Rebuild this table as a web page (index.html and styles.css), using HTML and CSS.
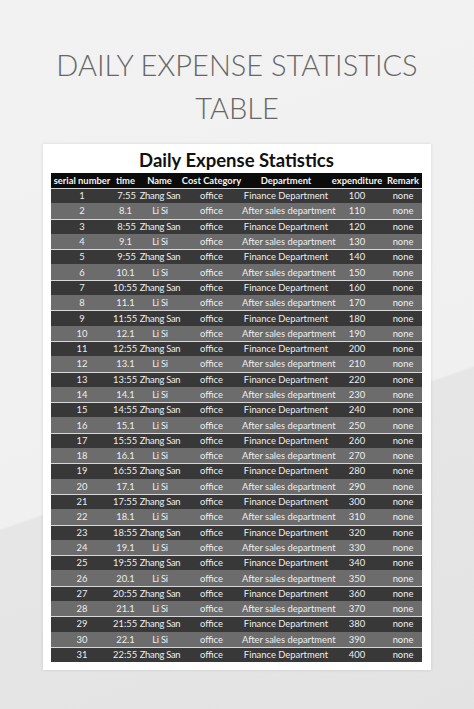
FILE: index.html
```html
<!DOCTYPE html>
<html>
<head>
<meta charset="utf-8">
<link rel="stylesheet" href="styles.css">
</head>
<body>
<div class="page">
  <h1 class="hero">DAILY EXPENSE STATISTICS<br>TABLE</h1>
  <div class="card">
    <div class="card-title">Daily Expense Statistics</div>
    <table class="sheet">
      <colgroup>
        <col class="c1"><col class="c2"><col class="c3"><col class="c4"><col class="c5"><col class="c6"><col class="c7">
      </colgroup>
      <thead>
        <tr><th>serial number</th><th>time</th><th>Name</th><th>Cost Category</th><th>Department</th><th>expenditure</th><th>Remark</th></tr>
      </thead>
      <tbody>
        <tr class="odd"><td>1</td><td>7:55</td><td>Zhang San</td><td>office</td><td>Finance Department</td><td>100</td><td>none</td></tr>
        <tr class="even"><td>2</td><td>8.1</td><td>Li Si</td><td>office</td><td>After sales department</td><td>110</td><td>none</td></tr>
        <tr class="odd"><td>3</td><td>8:55</td><td>Zhang San</td><td>office</td><td>Finance Department</td><td>120</td><td>none</td></tr>
        <tr class="even"><td>4</td><td>9.1</td><td>Li Si</td><td>office</td><td>After sales department</td><td>130</td><td>none</td></tr>
        <tr class="odd"><td>5</td><td>9:55</td><td>Zhang San</td><td>office</td><td>Finance Department</td><td>140</td><td>none</td></tr>
        <tr class="even"><td>6</td><td>10.1</td><td>Li Si</td><td>office</td><td>After sales department</td><td>150</td><td>none</td></tr>
        <tr class="odd"><td>7</td><td>10:55</td><td>Zhang San</td><td>office</td><td>Finance Department</td><td>160</td><td>none</td></tr>
        <tr class="even"><td>8</td><td>11.1</td><td>Li Si</td><td>office</td><td>After sales department</td><td>170</td><td>none</td></tr>
        <tr class="odd"><td>9</td><td>11:55</td><td>Zhang San</td><td>office</td><td>Finance Department</td><td>180</td><td>none</td></tr>
        <tr class="even"><td>10</td><td>12.1</td><td>Li Si</td><td>office</td><td>After sales department</td><td>190</td><td>none</td></tr>
        <tr class="odd"><td>11</td><td>12:55</td><td>Zhang San</td><td>office</td><td>Finance Department</td><td>200</td><td>none</td></tr>
        <tr class="even"><td>12</td><td>13.1</td><td>Li Si</td><td>office</td><td>After sales department</td><td>210</td><td>none</td></tr>
        <tr class="odd"><td>13</td><td>13:55</td><td>Zhang San</td><td>office</td><td>Finance Department</td><td>220</td><td>none</td></tr>
        <tr class="even"><td>14</td><td>14.1</td><td>Li Si</td><td>office</td><td>After sales department</td><td>230</td><td>none</td></tr>
        <tr class="odd"><td>15</td><td>14:55</td><td>Zhang San</td><td>office</td><td>Finance Department</td><td>240</td><td>none</td></tr>
        <tr class="even"><td>16</td><td>15.1</td><td>Li Si</td><td>office</td><td>After sales department</td><td>250</td><td>none</td></tr>
        <tr class="odd"><td>17</td><td>15:55</td><td>Zhang San</td><td>office</td><td>Finance Department</td><td>260</td><td>none</td></tr>
        <tr class="even"><td>18</td><td>16.1</td><td>Li Si</td><td>office</td><td>After sales department</td><td>270</td><td>none</td></tr>
        <tr class="odd"><td>19</td><td>16:55</td><td>Zhang San</td><td>office</td><td>Finance Department</td><td>280</td><td>none</td></tr>
        <tr class="even"><td>20</td><td>17.1</td><td>Li Si</td><td>office</td><td>After sales department</td><td>290</td><td>none</td></tr>
        <tr class="odd"><td>21</td><td>17:55</td><td>Zhang San</td><td>office</td><td>Finance Department</td><td>300</td><td>none</td></tr>
        <tr class="even"><td>22</td><td>18.1</td><td>Li Si</td><td>office</td><td>After sales department</td><td>310</td><td>none</td></tr>
        <tr class="odd"><td>23</td><td>18:55</td><td>Zhang San</td><td>office</td><td>Finance Department</td><td>320</td><td>none</td></tr>
        <tr class="even"><td>24</td><td>19.1</td><td>Li Si</td><td>office</td><td>After sales department</td><td>330</td><td>none</td></tr>
        <tr class="odd"><td>25</td><td>19:55</td><td>Zhang San</td><td>office</td><td>Finance Department</td><td>340</td><td>none</td></tr>
        <tr class="even"><td>26</td><td>20.1</td><td>Li Si</td><td>office</td><td>After sales department</td><td>350</td><td>none</td></tr>
        <tr class="odd"><td>27</td><td>20:55</td><td>Zhang San</td><td>office</td><td>Finance Department</td><td>360</td><td>none</td></tr>
        <tr class="even"><td>28</td><td>21.1</td><td>Li Si</td><td>office</td><td>After sales department</td><td>370</td><td>none</td></tr>
        <tr class="odd"><td>29</td><td>21:55</td><td>Zhang San</td><td>office</td><td>Finance Department</td><td>380</td><td>none</td></tr>
        <tr class="even"><td>30</td><td>22.1</td><td>Li Si</td><td>office</td><td>After sales department</td><td>390</td><td>none</td></tr>
        <tr class="odd"><td>31</td><td>22:55</td><td>Zhang San</td><td>office</td><td>Finance Department</td><td>400</td><td>none</td></tr>
      </tbody>
    </table>
  </div>
</div>
</body>
</html>
```
FILE: styles.css
```css
html, body {
  margin: 0;
  padding: 0;
}
body {
  width: 474px;
  height: 709px;
  overflow: hidden;
  background: linear-gradient(161deg, #f2f2f2 0%, #f0f0f0 60.6%, #e6e6e6 60.9%, #e3e3e3 100%);
  font-family: "Lato", "Liberation Sans", sans-serif;
}
.page {
  display: flex;
  flex-direction: column;
  align-items: center;
  padding-top: 43px;
}
.hero {
  margin: 0;
  font-family: "Lato", "Liberation Sans", sans-serif;
  font-weight: 300;
  font-size: 29px;
  line-height: 43px;
  color: #666;
  text-align: center;
}
.card {
  margin-top: 15px;
  width: 388px;
  height: 526px;
  box-sizing: border-box;
  background: #fff;
  box-shadow: 0 0 3px rgba(0,0,0,0.12);
  padding: 0 9px 0 8px;
}
.card-title {
  height: 29px;
  line-height: 33px;
  text-align: center;
  font-weight: 700;
  font-size: 18.5px;
  color: #111;
}
.sheet {
  width: 371px;
  border-collapse: collapse;
  table-layout: fixed;
  font-size: 9.4px;
  color: #eee;
}
.c1 { width: 62px; }
.c2 { width: 25px; }
.c3 { width: 43px; }
.c4 { width: 61px; }
.c5 { width: 88px; }
.c6 { width: 54px; }
.c7 { width: 38px; }
.sheet th, .sheet td {
  padding: 0;
  text-align: center;
  white-space: nowrap;
  line-height: 11px;
}
.sheet th {
  background: #0b0b0b;
  color: #f2f2f2;
  font-weight: 700;
  height: 15px;
}
.sheet td {
  height: 15.3px;
  font-weight: 400;
}
.sheet tr.odd td:nth-child(2) {
  text-align: right;
  padding-right: 2px;
}
.sheet td:nth-child(3) {
  letter-spacing: -0.25px;
  padding-left: 1px;
}
.sheet tr.odd td {
  background: #383838;
  box-shadow: inset 0 1px 0 #d8d8d8;
}
.sheet tr.even td {
  background: #6c6c6c;
}
```
